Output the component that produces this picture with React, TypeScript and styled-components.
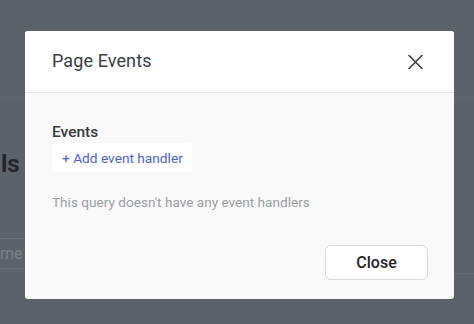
import React from "react";
import styled, { createGlobalStyle } from "styled-components";

const Global = createGlobalStyle`
  html, body { margin: 0; padding: 0; }
  body { background: #5c626a; font-family: Roboto, "Noto Sans", Arial, sans-serif; }
  * { box-sizing: border-box; }
`;

const Stage = styled.div`
  position: relative;
  width: 474px;
  height: 324px;
  overflow: hidden;
  background: #5c626a;
`;

const BehindPage = styled.div`
  display: flex;
  flex-direction: column;
  height: 100%;
  padding-top: 97px;
`;

const BehindSection = styled.div`
  border-top: 1px solid #61676f;
  padding-top: 52px;
  display: flex;
  flex-direction: column;
`;

const BehindHeading = styled.div`
  font-size: 24px;
  font-weight: 700;
  color: #22262c;
  line-height: 28px;
  padding-left: 1px;
`;

const BehindRow = styled.div`
  margin-top: 60px;
  display: flex;
  align-items: flex-start;
`;

const BehindInput = styled.div`
  width: 60px;
  height: 31px;
  border-top: 1px solid #6a7078;
  border-bottom: 1px solid #6a7078;
  font-size: 16px;
  color: #7c8189;
  line-height: 29px;
`;

const BehindRule = styled.div`
  flex: 1;
  margin-top: 35px;
  border-top: 1px solid #646a72;
`;

const Overlay = styled.div`
  position: absolute;
  inset: 0;
  padding: 31px 0 0 25px;
`;

const Modal = styled.div`
  width: 429px;
  height: 268px;
  background: #f9f9f9;
  border-radius: 3px;
  display: flex;
  flex-direction: column;
  overflow: hidden;
`;

const Header = styled.div`
  height: 62px;
  background: #ffffff;
  border-bottom: 1px solid #e4e5e7;
  display: flex;
  align-items: center;
  justify-content: space-between;
  padding: 0 31px 0 27px;
  flex-shrink: 0;
`;

const Title = styled.h2`
  margin: 0;
  font-size: 18px;
  font-weight: 400;
  color: #383d43;
  letter-spacing: 0.1px;
  position: relative;
  top: -1px;
`;

const IconButton = styled.button`
  border: none;
  background: transparent;
  padding: 0;
  width: 16px;
  height: 16px;
  display: flex;
  align-items: center;
  justify-content: center;
  cursor: pointer;
`;

const Body = styled.div`
  flex: 1;
  display: flex;
  flex-direction: column;
  align-items: flex-start;
  padding: 30px 26px 0 27px;
`;

const SectionLabel = styled.div`
  font-size: 15.5px;
  font-weight: 500;
  color: #363b41;
  line-height: 18px;
`;

const AddButton = styled.button`
  margin-top: 2px;
  background: #ffffff;
  border: none;
  border-radius: 3px;
  height: 29px;
  padding: 0 9px 0 10px;
  font-family: inherit;
  font-size: 13.7px;
  color: #4a61d4;
  cursor: pointer;
`;

const EmptyText = styled.p`
  margin: 22px 0 0;
  font-size: 13.6px;
  color: #9a9da2;
  line-height: 16px;
`;

const Footer = styled.div`
  display: flex;
  justify-content: flex-end;
  padding: 0 26px 19px 0;
`;

const CloseButton = styled.button`
  width: 103px;
  height: 35px;
  background: #ffffff;
  border: 1px solid #d6d8db;
  border-radius: 6px;
  font-family: inherit;
  font-size: 16px;
  font-weight: 500;
  color: #1f2226;
  cursor: pointer;
`;

export default function App() {
  return (
    <Stage>
      <Global />
      <BehindPage>
        <BehindSection>
          <BehindHeading>ls</BehindHeading>
          <BehindRow>
            <BehindInput>me</BehindInput>
            <BehindRule />
          </BehindRow>
        </BehindSection>
      </BehindPage>
      <Overlay>
        <Modal>
          <Header>
            <Title>Page Events</Title>
            <IconButton aria-label="Close">
              <svg width="15" height="14" viewBox="0 0 15 14">
                <path d="M1 0.5 L14 13.5 M14 0.5 L1 13.5" stroke="#3a3f45" strokeWidth="1.6" strokeLinecap="round" />
              </svg>
            </IconButton>
          </Header>
          <Body>
            <SectionLabel>Events</SectionLabel>
            <AddButton>+ Add event handler</AddButton>
            <EmptyText>This query doesn't have any event handlers</EmptyText>
          </Body>
          <Footer>
            <CloseButton>Close</CloseButton>
          </Footer>
        </Modal>
      </Overlay>
    </Stage>
  );
}
